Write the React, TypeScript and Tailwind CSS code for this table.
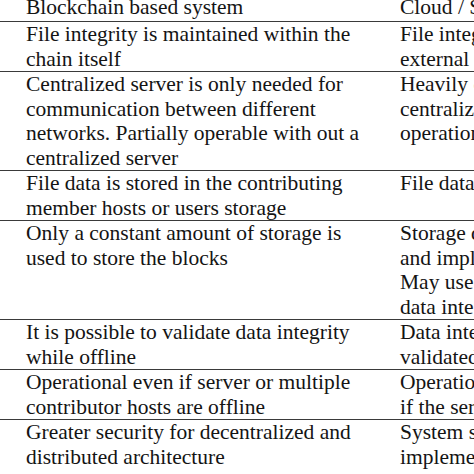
import React from 'react'

interface Row {
  left: string[]
  right: string[]
}

const header: Row = {
  left: ['Blockchain based system'],
  right: ['Cloud / Server based system'],
}

const rows: Row[] = [
  {
    left: ['File integrity is maintained within the', 'chain itself'],
    right: ['File integrity is maintained by an', 'external server'],
  },
  {
    left: [
      'Centralized server is only needed for',
      'communication between different',
      'networks. Partially operable with out a',
      'centralized server',
    ],
    right: ['Heavily dependent on the', 'centralized server. Not', 'operational without it'],
  },
  {
    left: ['File data is stored in the contributing', 'member hosts or users storage'],
    right: ['File data is stored in the server'],
  },
  {
    left: ['Only a constant amount of storage is', 'used to store the blocks'],
    right: [
      'Storage depends on the server',
      'and implementation.',
      'May use extra storage for',
      'data integrity',
    ],
  },
  {
    left: ['It is possible to validate data integrity', 'while offline'],
    right: ['Data integrity can only be', 'validated while online'],
  },
  {
    left: ['Operational even if server or multiple', 'contributor hosts are offline'],
    right: ['Operational only', 'if the server is online'],
  },
  {
    left: ['Greater security for decentralized and', 'distributed architecture'],
    right: ['System security depends on', 'implementation'],
  },
]

function Cell({ lines, first }: { lines: string[]; first?: boolean }) {
  return (
    <div className={first ? 'pl-[26px]' : 'pl-0'}>
      {lines.map((l, i) => (
        <div key={i} className="whitespace-nowrap">
          {l}
        </div>
      ))}
    </div>
  )
}

export default function App() {
  return (
    <div
      className="w-[474px] h-[474px] overflow-hidden bg-white text-[#141414] text-[21.5px] leading-[24.5px]"
      style={{ fontFamily: '"Liberation Serif", "Times New Roman", serif' }}
    >
      <div className="-mt-[5px]">
        <div className="grid grid-cols-[400px_1fr] pb-[1.5px]">
          <Cell lines={header.left} first />
          <Cell lines={header.right} />
        </div>
        {rows.map((r, i) => (
          <div key={i} className="grid grid-cols-[400px_1fr] border-t-[1.5px] border-[#3a3a3a]">
            <Cell lines={r.left} first />
            <Cell lines={r.right} />
          </div>
        ))}
      </div>
    </div>
  )
}
